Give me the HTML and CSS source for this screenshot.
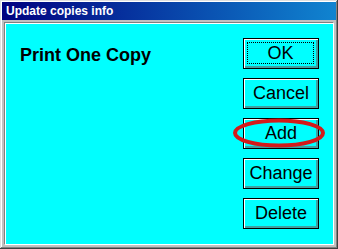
FILE: index.html
```html
<!DOCTYPE html>
<html>
<head>
<meta charset="utf-8">
<link rel="stylesheet" href="styles.css">
</head>
<body>
<div class="window">
  <div class="titlebar">Update copies info</div>
  <div class="panel">
    <div class="label">Print One Copy</div>
    <div class="buttons">
      <div class="btn default"><span class="focus">OK</span></div>
      <div class="btn">Cancel</div>
      <div class="btn add">Add
        <svg class="ring" width="96" height="32" viewBox="0 0 96 32"><ellipse cx="48" cy="16" rx="44" ry="12.5" fill="none" stroke="#d41a1a" stroke-width="4"/></svg>
      </div>
      <div class="btn">Change</div>
      <div class="btn">Delete</div>
    </div>
  </div>
</div>
</body>
</html>
```
FILE: styles.css
```css
html, body {
  margin: 0;
  padding: 0;
  background: #c0c0c0;
}
.window {
  width: 338px;
  height: 249px;
  box-sizing: border-box;
  padding: 2px;
  background: #c0c0c0;
  box-shadow: inset -1px -1px #404040, inset 1px 1px #dfdfdf, inset -2px -2px #808080, inset 2px 2px #ffffff;
  display: flex;
  flex-direction: column;
}
.titlebar {
  height: 18px;
  line-height: 18px;
  background: linear-gradient(to right, #000080, #1084d0);
  color: #fff;
  font-family: "Liberation Sans", Arial, sans-serif;
  font-weight: bold;
  font-size: 12px;
  padding-left: 4px;
  flex: none;
}
.panel {
  margin: 2px 2px 2px 2px;
  flex: 1;
  background: #00ffff;
  border-top: 1px solid #808080;
  border-left: 1px solid #808080;
  border-right: 1px solid #ffffff;
  border-bottom: 1px solid #ffffff;
  box-shadow: inset 1px 1px #ffffff;
  display: flex;
  justify-content: space-between;
  padding: 15px 14px 0 15px;
}
.label {
  font-family: "Liberation Sans", Arial, sans-serif;
  font-weight: bold;
  font-size: 18px;
  line-height: 20px;
  color: #000;
  margin-top: 7px;
}
.buttons {
  display: flex;
  flex-direction: column;
  gap: 9px;
}
.btn {
  position: relative;
  width: 76px;
  height: 31px;
  box-sizing: border-box;
  border: 1px solid #000;
  box-shadow: inset 1px 1px #ffffff, inset -2px -2px #40a0a0;
  font-family: "Liberation Sans", Arial, sans-serif;
  font-size: 18px;
  color: #000;
  display: flex;
  align-items: center;
  justify-content: center;
}
.btn.default .focus {
  position: absolute;
  left: 3px;
  top: 3px;
  right: 4px;
  bottom: 4px;
  border: 1px dotted #000;
  display: flex;
  align-items: center;
  justify-content: center;
}
.ring {
  position: absolute;
  left: -13px;
  top: -2px;
}
```
